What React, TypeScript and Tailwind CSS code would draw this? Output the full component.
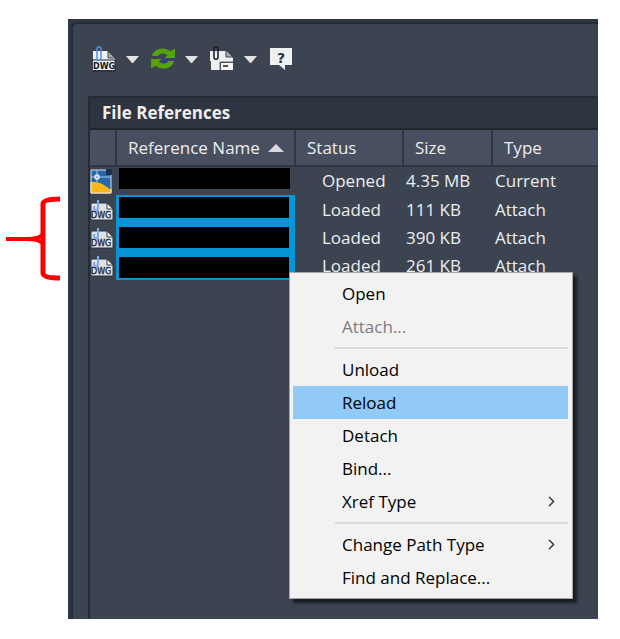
import { ChevronRight } from "lucide-react";
import clsx from "clsx";

type Reference = {
  status: string;
  size: string;
  type: string;
  current?: boolean;
};

type MenuItem = {
  label: string;
  disabled?: boolean;
  active?: boolean;
  submenu?: boolean;
};

const references: Reference[] = [
  { status: "Opened", size: "4.35 MB", type: "Current", current: true },
  { status: "Loaded", size: "111 KB", type: "Attach" },
  { status: "Loaded", size: "390 KB", type: "Attach" },
  { status: "Loaded", size: "261 KB", type: "Attach" },
];

const menuGroups: MenuItem[][] = [
  [{ label: "Open" }, { label: "Attach...", disabled: true }],
  [
    { label: "Unload" },
    { label: "Reload", active: true },
    { label: "Detach" },
    { label: "Bind..." },
    { label: "Xref Type", submenu: true },
  ],
  [{ label: "Change Path Type", submenu: true }, { label: "Find and Replace..." }],
];

const AttachDwgIcon = () => (
  <svg width="24" height="26" viewBox="0 0 24 26" aria-hidden="true">
    <path d="M1 5h15l7 7v12H1z" fill="#f1f2f4" />
    <path d="M16 5v7h7z" fill="#a3acba" stroke="#3c4452" />
    <path d="M0 14h23v11H1" fill="none" stroke="#20242c" />
    <text x="1" y="23" fontSize="8" fontWeight="700" fontFamily="DejaVu Sans" fill="#15181e">
      DWG
    </text>
    <path d="M5 7v5c0 3 4 3 4 0V3c0-3-4-3-4 0v4" fill="none" stroke="#4f8fe6" strokeWidth="1.5" />
  </svg>
);

const RefreshIcon = () => (
  <svg width="25" height="23" viewBox="0 0 25 23" fill="#55a307" aria-hidden="true">
    <path d="M1 9C2 4 7 1 12 1c3 0 6 1 8 3l5-3v10H14l3-3c-4-3-8-2-10 1z" />
    <path d="M24 14c-1 5-6 8-11 8-3 0-6-1-8-3l-5 3V12h11l-3 3c4 3 8 2 10-1z" />
  </svg>
);

const ChangePathIcon = () => (
  <svg width="24" height="25" viewBox="0 0 24 25" aria-hidden="true">
    <path d="M0 5h16l7 7v4H10v8H1V15H0z" fill="#eff0f2" />
    <path d="M16 4v7h7z" fill="#a3acba" stroke="#3c4452" />
    <path d="M11 17h12v7H11z" fill="#f7f7f7" />
    <path d="M10 24v-8h13" fill="none" stroke="#5b6371" />
    <path d="M13 20h5" stroke="#15181e" strokeWidth="1.5" />
    <path d="M4 6v5c0 3 4 3 4 0V2c0-2-4-2-4 0v5" fill="none" stroke="#171b22" strokeWidth="1.5" />
  </svg>
);

const HelpIcon = () => (
  <svg width="22" height="23" viewBox="0 0 22 23" aria-hidden="true">
    <path d="M0 1h22v17h-7v5l-6-5H0z" fill="#eeeff1" />
    <text x="11" y="16" textAnchor="middle" fontSize="14" fontWeight="700" fontFamily="DejaVu Sans" fill="#2c323c">
      ?
    </text>
  </svg>
);

const DrawingIcon = () => (
  <svg width="22" height="25" viewBox="0 0 22 25" aria-hidden="true">
    <path d="M1 1h15l5 5v18H1z" fill="#2a67a8" stroke="#d9dde3" />
    <path d="M16 0v6h6V0z" fill="#1d2f49" />
    <path d="M1 13h5c6 1 10 4 15 8v3H1z" fill="#fab71c" />
    <path d="M7 1v12M1 8h20" stroke="#a9c8e8" />
    <circle cx="7" cy="8" r="2" fill="#8db8e2" stroke="#e4eef8" strokeWidth="1.5" />
    <path d="M1 13v11h20v-4" fill="none" stroke="#f5ecd6" />
  </svg>
);

const DwgFileIcon = () => (
  <svg width="24" height="22" viewBox="0 0 24 22" aria-hidden="true">
    <path d="M1 4h16l6 6v11H1z" fill="#dfe1e5" stroke="#2b313b" />
    <path d="M17 4v6h6z" fill="#f2f2f3" stroke="#3a414d" />
    <text x="1" y="19" fontSize="8" fontFamily="DejaVu Sans" fill="#20242c" stroke="#20242c" strokeWidth="0.3">
      DWG
    </text>
    <path d="M4 7v2c0 3 4 3 4 0V1" fill="none" stroke="#79a9f2" strokeWidth="2" />
  </svg>
);

const toolbar = [
  { label: "Attach DWG", icon: AttachDwgIcon },
  { label: "Refresh", icon: RefreshIcon },
  { label: "Change Path", icon: ChangePathIcon },
];

const Toolbar = () => (
  <div className="flex h-[72px] items-center pb-[3px] pl-[19px]">
    {toolbar.map(({ label, icon: Icon }) => (
      <div key={label} className="flex w-[59px] items-center gap-[10px]">
        <button type="button" aria-label={label} className="flex w-6 justify-center">
          <Icon />
        </button>
        <button type="button" aria-label={`${label} options`}>
          <svg width="13" height="8" viewBox="0 0 13 8" aria-hidden="true">
            <path d="M0 1h13L7 8H6z" fill="#e3e3e4" />
          </svg>
        </button>
      </div>
    ))}
    <button type="button" aria-label="Help" className="pl-px">
      <HelpIcon />
    </button>
  </div>
);

const Redacted = () => <div className="h-[21px] bg-black" />;

const ReferenceTable = () => (
  <table className="w-full table-fixed border-collapse text-left">
    <colgroup>
      <col className="w-[26px]" />
      <col className="w-[179px]" />
      <col className="w-[108px]" />
      <col className="w-[89px]" />
      <col />
    </colgroup>
    <thead>
      <tr className="h-[36px] border-b-2 border-[#303744] bg-[#474f61] [&>th]:font-normal [&>th+th]:border-l-2 [&>th+th]:border-[#303744] [&>th+th]:pl-[11px]">
        <th aria-label="Icon" />
        <th>
          <span className="flex items-center gap-2">
            Reference Name
            <svg width="16" height="8" viewBox="0 0 16 8" aria-hidden="true">
              <path d="M0 8h16L8 0z" fill="#d9dadd" />
            </svg>
          </span>
        </th>
        <th>Status</th>
        <th>Size</th>
        <th>Type</th>
      </tr>
    </thead>
    <tbody>
      {references.map((ref, index) => (
        <tr key={index} className={index < 2 ? "h-[29px]" : "h-[28px]"}>
          <td>{ref.current ? <DrawingIcon /> : <DwgFileIcon />}</td>
          {index === 0 && (
            <td className="pr-[5px] pb-[6px] pl-[3px] align-bottom">
              <Redacted />
            </td>
          )}
          {index === 1 && (
            <td rowSpan={3} className="bg-[#0696d7] pr-[6px] pl-[3px]">
              <div className="flex flex-col gap-[9px]">
                <Redacted />
                <Redacted />
                <Redacted />
              </div>
            </td>
          )}
          <td className="pl-[27px]">{ref.status}</td>
          <td className="pl-[3px]">{ref.size}</td>
          <td className="pl-[3px]">{ref.type}</td>
        </tr>
      ))}
    </tbody>
  </table>
);

const ContextMenu = () => (
  <div
    role="menu"
    className="absolute top-[253px] left-[221px] w-[284px] border border-[#a5a5a5] bg-[#f2f2f2] py-1 pr-1 pl-[3px] text-black shadow-[4px_4px_3px_rgba(0,0,0,0.6)]"
  >
    {menuGroups.map((group, index) => (
      <div key={index}>
        {index > 0 && <hr className="my-[4px] ml-[42px] border-t-2 border-[#d9d9d9]" />}
        {group.map(item => (
          <button
            key={item.label}
            type="button"
            role="menuitem"
            disabled={item.disabled}
            className={clsx(
              "flex h-[33px] w-full items-center justify-between pr-[8px] pl-[49px] text-left",
              item.active && "bg-[#91c9f7]",
              item.disabled && "text-[#7d7d7d]"
            )}
          >
            {item.label}
            {item.submenu && <ChevronRight size={17} className="text-[#333]" />}
          </button>
        ))}
      </div>
    ))}
  </div>
);

// Red brace that groups the selected rows
const Brace = () => (
  <svg width="54" height="86" viewBox="0 0 54 86" fill="none" stroke="#fe0000" strokeWidth="5" aria-hidden="true">
    <path d="M54 3C45 3 37 4 37 8v69c0 4 8 5 17 5" />
    <path d="M0 43h20c9 0 15-1 17-5M20 43c9 0 15 1 17 5" strokeWidth="4" />
  </svg>
);

const App = () => {
  return (
    <div className="flex min-h-screen bg-white pt-[19px] pr-[22px] pb-5 font-['Open_Sans','Noto_Sans',sans-serif] text-[17px] leading-5">
      <div className="w-[68px] shrink-0 pt-[177px] pl-[6px]">
        <Brace />
      </div>
      <main className="relative flex min-w-0 flex-1 bg-[#303744] pt-[3px] pl-[3px] text-[#eeeeee]">
        <div className="flex min-w-0 flex-1 flex-col rounded-tl-md border-t-2 border-l-2 border-[#262c37] bg-[#3c4452]">
          <Toolbar />
          <section className="ml-[15px] flex-1 border-t-2 border-l-2 border-[#262c37]">
            <h2 className="flex h-[32px] items-center border-b-2 border-[#222731] bg-[#2e3440] pl-3 font-bold">
              File References
            </h2>
            <ReferenceTable />
          </section>
        </div>
        <ContextMenu />
      </main>
    </div>
  );
};

export default App;
